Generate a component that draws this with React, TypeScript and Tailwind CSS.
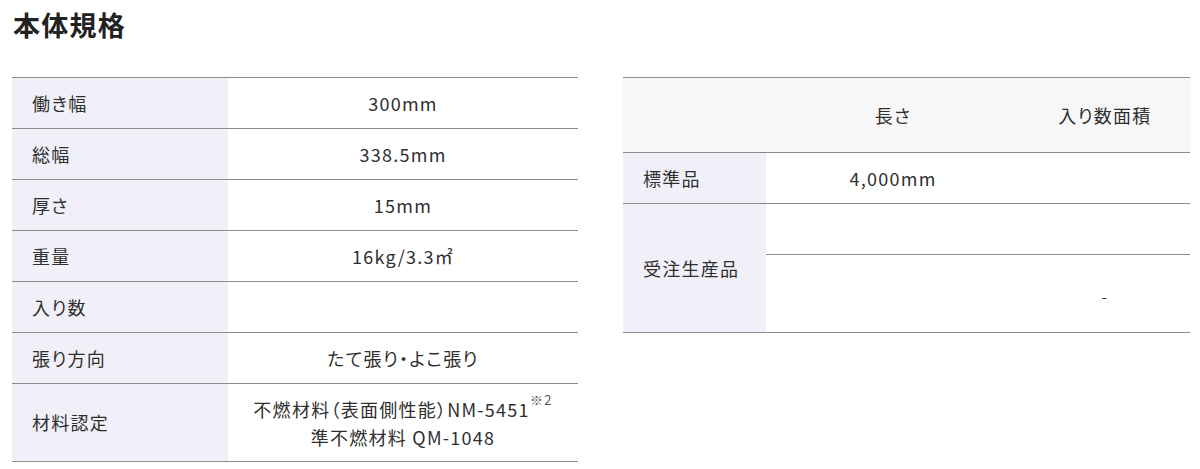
const font = { fontFamily: '"Noto Sans CJK JP", "Noto Sans", sans-serif' }

const specs: { label: string; value: React.ReactNode; tall?: boolean }[] = [
  { label: '働き幅', value: '300mm' },
  { label: '総幅', value: '338.5mm' },
  { label: '厚さ', value: '15mm' },
  { label: '重量', value: <>16kg/3.3㎡</> },
  { label: '入り数', value: '' },
  { label: '張り方向', value: 'たて張り・よこ張り' },
  {
    label: '材料認定',
    tall: true,
    value: (
      <span className="whitespace-nowrap">
        不燃材料（表面側性能）NM-5451<sup className="text-[13px] align-[5px] text-[#555]">※2</sup>
        <br />
        準不燃材料 QM-1048
      </span>
    ),
  },
]

export default function App() {
  return (
    <div
      className="bg-white w-[1200px] h-[469px] text-[#2f2f2f] text-[18px] tracking-[0.07em] [font-feature-settings:'palt'] overflow-hidden"
      style={font}
    >
      <h2 className="pl-[13px] pt-[7px] text-[27px] font-bold leading-[36px] text-[#222]">本体規格</h2>

      <div className="flex items-start gap-[45px] pl-3 mt-[34px]">
        {/* Left spec table */}
        <table className="w-[566px] border-collapse border-t border-[#8c8c8c]">
          <tbody>
            {specs.map((s) => (
              <tr key={s.label} className="border-b border-[#8c8c8c]">
                <td
                  className={`w-[216px] bg-[#f1f0f8] pl-5 align-middle ${s.tall ? 'h-[78px]' : 'h-[51px]'}`}
                >
                  {s.label}
                </td>
                <td className="text-center align-middle leading-[28px]">{s.value}</td>
              </tr>
            ))}
          </tbody>
        </table>

        {/* Right size table */}
        <table className="w-[567px] border-collapse border-t border-[#8c8c8c]">
          <thead>
            <tr className="bg-[#f7f7f7] border-b border-[#8c8c8c]">
              <th className="w-[143px] h-[75px] font-normal"></th>
              <th className="w-[254px] font-normal text-center">長さ</th>
              <th className="font-normal text-center">入り数面積</th>
            </tr>
          </thead>
          <tbody>
            <tr className="border-b border-[#8c8c8c]">
              <td className="h-[51px] bg-[#f1f0f8] pl-5">標準品</td>
              <td className="text-center">4,000mm</td>
              <td></td>
            </tr>
            <tr className="border-b border-[#8c8c8c]">
              <td rowSpan={2} className="bg-[#f1f0f8] pl-5 align-middle border-b border-[#8c8c8c]">
                受注生産品
              </td>
              <td className="h-[51px]"></td>
              <td></td>
            </tr>
            <tr className="border-b border-[#8c8c8c]">
              <td className="h-[78px]"></td>
              <td className="text-center align-middle pt-[8px] text-[15px]">-</td>
            </tr>
          </tbody>
        </table>
      </div>
    </div>
  )
}
